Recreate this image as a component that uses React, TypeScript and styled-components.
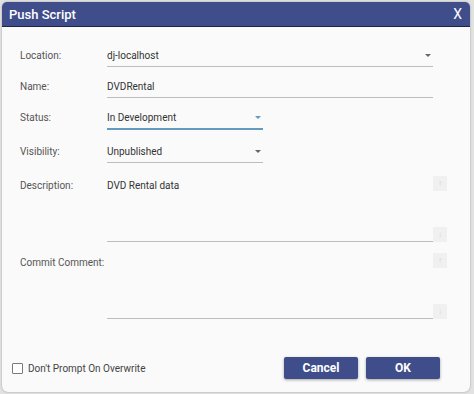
import React, { useState } from "react";
import styled, { createGlobalStyle } from "styled-components";

const palette = {
  navy: "#3f4e8b",
  page: "#e2e2e2",
  body: "#fafafa",
  label: "#555555",
  value: "#333333",
  line: "#bdbdbd",
  focus: "#6499c0",
};

const GlobalStyle = createGlobalStyle`
  html, body {
    margin: 0;
    padding: 0;
    background: ${palette.page};
    font-family: Roboto, "Liberation Sans", sans-serif;
  }
`;

// 바깥 여백 포함 다이얼로그 위치
const Page = styled.div`
  width: 474px;
  height: 394px;
  padding: 2px 4px 2px 2px;
  box-sizing: border-box;
`;

const Dialog = styled.div`
  width: 468px;
  height: 390px;
  display: flex;
  flex-direction: column;
  background: ${palette.body};
  border-radius: 5px 5px 6px 6px;
  box-shadow: 0 0 2px rgba(0, 0, 0, 0.35);
  overflow: hidden;
`;

const TitleBar = styled.div`
  height: 24px;
  flex: none;
  display: flex;
  align-items: center;
  justify-content: space-between;
  padding: 0 8px 0 7px;
  background: ${palette.navy};
  border-bottom: 1px solid #1f2540;
  color: #ffffff;

  h1 {
    margin: 0;
    font-size: 13px;
    font-weight: 500;
  }

  .close {
    font-size: 14px;
    font-weight: 400;
    cursor: pointer;
  }
`;

const Form = styled.div`
  flex: 1;
  display: flex;
  flex-direction: column;
  padding: 19px 0 0 18px;
`;

const Row = styled.div<{ $mt: number }>`
  display: flex;
  margin-top: ${(p) => p.$mt}px;
`;

const Label = styled.div`
  width: 87px;
  flex: none;
  font-size: 10px;
  line-height: 18px;
  padding-top: 1px;
  color: ${palette.label};
`;

const Field = styled.div<{ $width: number; $focus?: boolean; $height?: number }>`
  position: relative;
  width: ${(p) => p.$width}px;
  height: ${(p) => (p.$height ? `${p.$height}px` : "auto")};
  box-sizing: border-box;
  padding: 1px 0;
  font-size: 10px;
  line-height: 18px;
  color: ${palette.value};
  border-bottom: ${(p) => (p.$focus ? `2px solid ${palette.focus}` : `1px solid ${palette.line}`)};
`;

const Caret = styled.span<{ $color: string }>`
  position: absolute;
  right: 2px;
  top: 8px;
  width: 0;
  height: 0;
  border-left: 3px solid transparent;
  border-right: 3px solid transparent;
  border-top: 3px solid ${(p) => p.$color};
`;

const TextArea = styled.div`
  display: flex;
`;

const ScrollCol = styled.div`
  width: 15px;
  display: flex;
  flex-direction: column;
  justify-content: space-between;
`;

const ScrollBtn = styled.div`
  width: 14px;
  height: 15px;
  background: #f0f0f0;
  color: #d4d4d4;
  font-size: 8px;
  line-height: 15px;
  text-align: center;
`;

const Footer = styled.div`
  height: 35px;
  flex: none;
  display: flex;
  align-items: flex-start;
  justify-content: space-between;
  padding: 0 30px 0 10px;
`;

const Check = styled.label`
  display: flex;
  align-items: center;
  gap: 5px;
  margin-top: 6px;
  font-size: 10px;
  color: #444444;

  .box {
    width: 9px;
    height: 9px;
    border: 1px solid #7a7a7a;
    border-radius: 1px;
    background: #ffffff;
  }
`;

const Buttons = styled.div`
  display: flex;
  gap: 8px;
`;

const Button = styled.button`
  width: 74px;
  height: 22px;
  border: none;
  border-radius: 2px;
  background: ${palette.navy};
  color: #ffffff;
  font-family: Roboto, "Liberation Sans", sans-serif;
  font-size: 12px;
  font-weight: 700;
  box-shadow: 0 1px 3px rgba(0, 0, 0, 0.35);
  cursor: pointer;
`;

const App: React.FC = () => {
  const [noPrompt, setNoPrompt] = useState(false);

  return (
    <>
      <GlobalStyle />
      <Page>
        <Dialog>
          <TitleBar>
            <h1>Push Script</h1>
            <span className="close">X</span>
          </TitleBar>

          <Form>
            <Row $mt={0}>
              <Label>Location:</Label>
              <Field $width={326}>
                dj-localhost
                <Caret $color="#666666" />
              </Field>
            </Row>

            <Row $mt={10}>
              <Label>Name:</Label>
              <Field $width={326}>DVDRental</Field>
            </Row>

            <Row $mt={10}>
              <Label>Status:</Label>
              <Field $width={156} $focus>
                In Development
                <Caret $color={palette.focus} />
              </Field>
            </Row>

            <Row $mt={12}>
              <Label>Visibility:</Label>
              <Field $width={156}>
                Unpublished
                <Caret $color="#666666" />
              </Field>
            </Row>

            <Row $mt={13}>
              <Label>Description:</Label>
              <TextArea>
                <Field $width={326} $height={66}>
                  DVD Rental data
                </Field>
                <ScrollCol>
                  <ScrollBtn>↑</ScrollBtn>
                  <ScrollBtn>↓</ScrollBtn>
                </ScrollCol>
              </TextArea>
            </Row>

            <Row $mt={11}>
              <Label>Commit Comment:</Label>
              <TextArea>
                <Field $width={326} $height={66} />
                <ScrollCol>
                  <ScrollBtn>↑</ScrollBtn>
                  <ScrollBtn>↓</ScrollBtn>
                </ScrollCol>
              </TextArea>
            </Row>
          </Form>

          <Footer>
            <Check onClick={() => setNoPrompt(!noPrompt)}>
              <span className="box" />
              Don't Prompt On Overwrite
            </Check>
            <Buttons>
              <Button type="button">Cancel</Button>
              <Button type="button">OK</Button>
            </Buttons>
          </Footer>
        </Dialog>
      </Page>
    </>
  );
};

export default App;
